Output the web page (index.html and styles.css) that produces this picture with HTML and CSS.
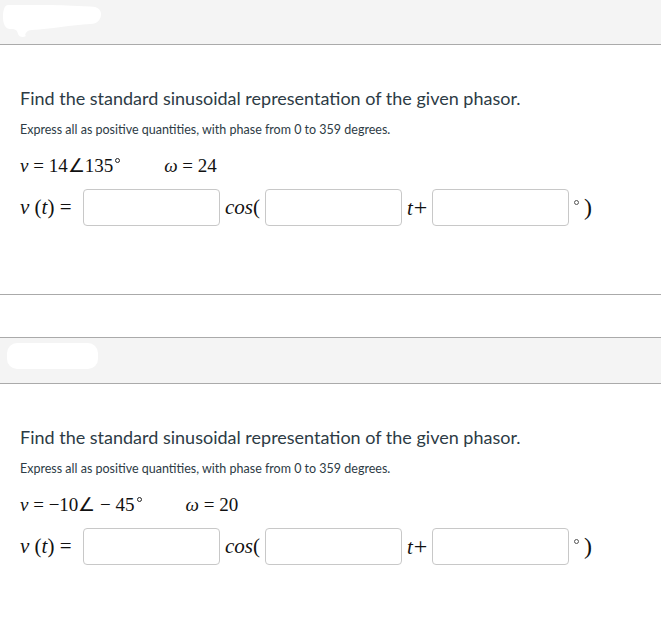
FILE: index.html
```html
<!DOCTYPE html>
<html>
<head>
<meta charset="utf-8">
<link rel="stylesheet" href="styles.css">
</head>
<body>
<div class="band band-top">
  <svg class="blob" width="110" height="40" viewBox="0 0 110 40"><path d="M8 5 H48 C60 5 72 6 90 6.5 C98 6.5 101 10 101 14 C101 19 98 24 90 24 C72 25 50 29 32 30 C26 30 24 35 26 36 C23 38 19 37 18 34 C17 29 14 29 10 29 C6 29 3 25 3 17 C3 9 5 5 8 5 Z" fill="#fff"/></svg>
</div>
<section class="question">
  <h2 class="title">Find the standard sinusoidal representation of the given phasor.</h2>
  <p class="hint">Express all as positive quantities, with phase from 0 to 359 degrees.</p>
  <div class="given">
    <span class="expr"><i>v</i> = 14∠135<span class="deg"></span></span>
    <span class="expr omega"><i>ω</i> = 24</span>
  </div>
  <div class="answer">
    <span class="expr lhs"><i>v</i> (<i>t</i>) =</span>
    <input class="box" type="text">
    <span class="expr fn-cos"><i>cos</i>(</span>
    <input class="box" type="text">
    <span class="expr fn-t"><i>t</i><span class="plus">+</span></span>
    <input class="box" type="text">
    <span class="expr tail"><span class="deg deg-tail"></span>)</span>
  </div>
</section>
<div class="gap"></div>
<div class="band band-mid">
  <div class="blob2"></div>
</div>
<section class="question">
  <h2 class="title">Find the standard sinusoidal representation of the given phasor.</h2>
  <p class="hint">Express all as positive quantities, with phase from 0 to 359 degrees.</p>
  <div class="given">
    <span class="expr"><i>v</i> = −10∠ − 45<span class="deg"></span></span>
    <span class="expr omega"><i>ω</i> = 20</span>
  </div>
  <div class="answer">
    <span class="expr lhs"><i>v</i> (<i>t</i>) =</span>
    <input class="box" type="text">
    <span class="expr fn-cos"><i>cos</i>(</span>
    <input class="box" type="text">
    <span class="expr fn-t"><i>t</i><span class="plus">+</span></span>
    <input class="box" type="text">
    <span class="expr tail"><span class="deg deg-tail"></span>)</span>
  </div>
</section>
</body>
</html>
```
FILE: styles.css
```css
html, body {
  margin: 0;
  padding: 0;
  background: #fff;
  font-family: Lato, "Noto Sans", sans-serif;
  color: #2d3b45;
}
.band {
  background: #f4f4f4;
  border-bottom: 1px solid #aaa;
  box-sizing: border-box;
}
.band-top {
  height: 45px;
}
.blob {
  display: block;
}
.band-mid {
  height: 47px;
  border-top: 1px solid #aaa;
  padding: 5px 0 0 7px;
}
.blob2 {
  width: 91px;
  height: 26px;
  background: #fff;
  border-radius: 10px;
}
.question {
  padding: 42px 20px 0;
  height: 250px;
  box-sizing: border-box;
  border-bottom: 1px solid #aaa;
}
.gap {
  height: 42px;
}
.title {
  font-size: 18px;
  font-weight: 400;
  margin: 0;
  line-height: 22px;
}
.hint {
  font-size: 12.5px;
  margin: 12px 0 0;
  line-height: 18px;
}
.given {
  display: flex;
  margin-top: 16px;
  line-height: 22px;
  font-family: "Liberation Serif", serif;
  font-size: 19px;
  color: #111;
}
.answer {
  display: flex;
  align-items: center;
  margin-top: 12px;
  font-family: "Liberation Serif", serif;
  font-size: 21px;
  color: #111;
}
.expr {
  font-family: "Liberation Serif", serif;
  white-space: nowrap;
}
.expr i {
  font-style: italic;
}
.deg {
  display: inline-block;
  width: 5px;
  height: 5px;
  box-sizing: border-box;
  border: 1px solid #222;
  border-radius: 50%;
  vertical-align: 9px;
  margin-left: 2px;
}
.omega {
  margin-left: 44px;
}
.lhs {
  width: 63px;
}
.box {
  width: 137px;
  height: 37px;
  flex: none;
  box-sizing: border-box;
  border: 1px solid #c8c8c8;
  border-radius: 4px;
  margin: 0;
  padding: 0 6px;
  background: #fff;
}
.fn-cos {
  width: 45px;
  box-sizing: border-box;
  padding-left: 5px;
}
.fn-t {
  width: 30px;
  box-sizing: border-box;
  padding-left: 5px;
}
.plus {
  font-size: 24px;
  margin-left: 1px;
}
.tail {
  padding-left: 5px;
  font-size: 24px;
}
.deg-tail {
  border-color: #555;
  vertical-align: 10px;
  margin: 0 5px 0 0;
}
```
